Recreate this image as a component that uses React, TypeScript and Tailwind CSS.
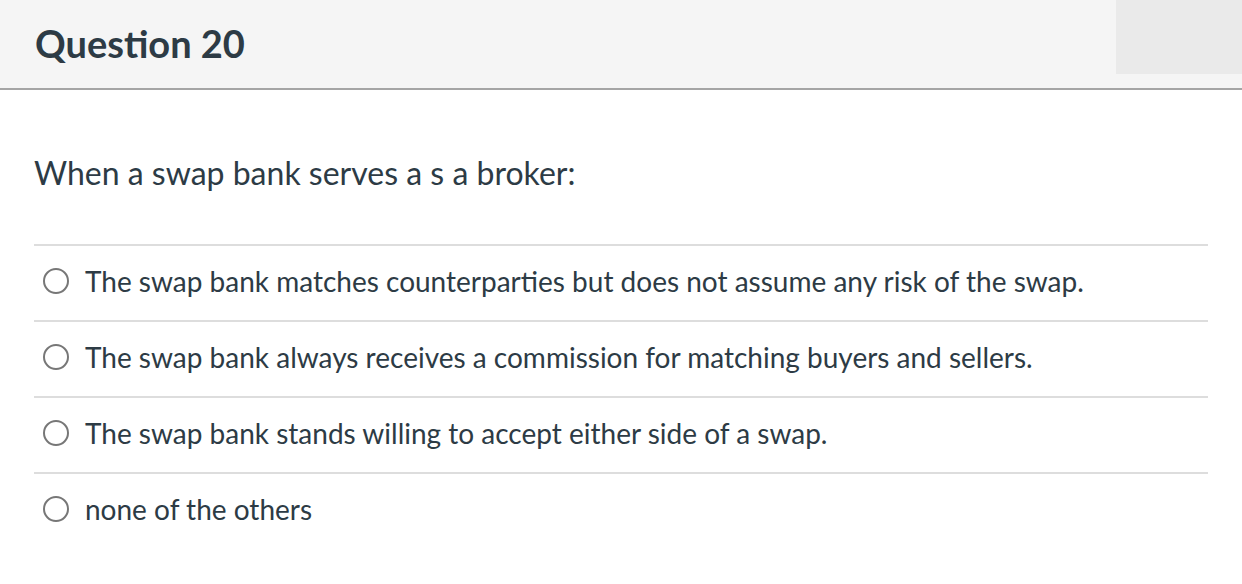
const OPTIONS = [
  "The swap bank matches counterparties but does not assume any risk of the swap.",
  "The swap bank always receives a commission for matching buyers and sellers.",
  "The swap bank stands willing to accept either side of a swap.",
  "none of the others",
];

export default function App() {
  return (
    <div className="min-h-[584px] bg-white text-[#2d3b45] font-['Lato','Liberation_Sans',sans-serif]">
      <header className="flex h-[90px] items-start justify-between border-b-2 border-[#a5a5a5] bg-[#f5f5f5]">
        <h2 className="pl-[35px] pt-[20px] text-[38px] font-bold leading-[46px] text-[#2d3b45]">
          Question 20
        </h2>
        <div className="h-[74px] w-[126px] bg-[#eaeaea]" />
      </header>

      <div className="px-[34px]">
        <p className="pt-[64px] text-[32px] leading-[38px]">
          When a swap bank serves a s a broker:
        </p>

        <div className="mt-[52px] w-[1174px]">
          {OPTIONS.map((opt) => (
            <label
              key={opt}
              className="flex h-[76px] items-center gap-[16px] border-t-2 border-[#dddddd] pb-[4px] pl-[9px]"
            >
              <span className="h-[26px] w-[26px] shrink-0 rounded-full border-2 border-[#777777] bg-white" />
              <span className="text-[28px] leading-[34px]">{opt}</span>
            </label>
          ))}
        </div>
      </div>
    </div>
  );
}
